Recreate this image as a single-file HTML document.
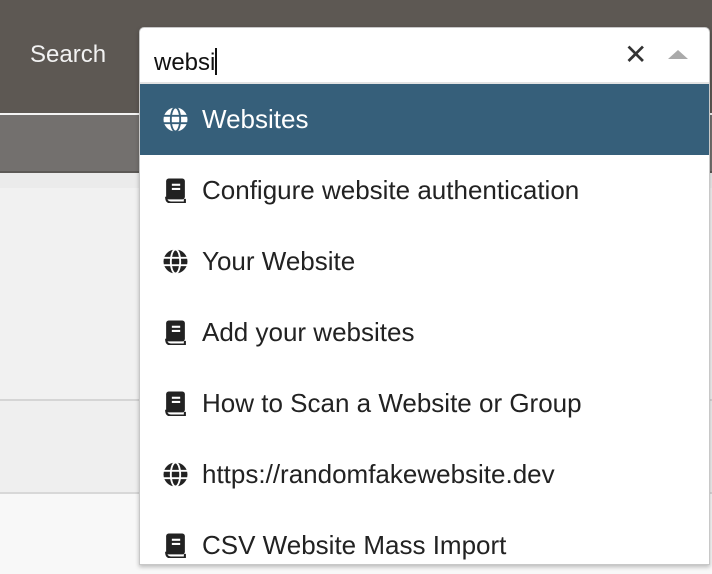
<!DOCTYPE html>
<html><head><style>
body{margin:0;width:712px;height:574px;position:relative;overflow:hidden;font-family:"Liberation Sans",Arial,sans-serif;background:#f8f8f8}
.abs{position:absolute;left:0;width:712px}
.dd{position:absolute;left:139px;top:27px;width:569px;height:536px;background:#fff;border:1px solid #c8c8c8;border-radius:5px 5px 0 0;box-shadow:0 2px 4px rgba(0,0,0,.25);overflow:hidden}
.inp{height:54px;border-bottom:2px solid #e3e3e3;position:relative}
.inp span{position:absolute;left:14px;top:20px;font-size:24px;color:#111}
.cur{display:inline-block;width:1.5px;height:27px;background:#111;vertical-align:-5px}
.it{height:71px;display:flex;align-items:center;font-size:26px;color:#222;padding-left:23px;white-space:nowrap}
.it svg{width:25px;height:25px;margin-right:14px;flex:none}
.sel{background:#365f7a;color:#fff}
</style></head><body>
<div class="abs" style="top:0;height:113px;background:#5d5853"></div>
<div class="abs" style="top:113px;height:2px;background:#f4f4f4"></div>
<div class="abs" style="top:115px;height:56px;background:#73706e"></div>
<div class="abs" style="top:171px;height:2px;background:#5c5956"></div>
<div class="abs" style="top:173px;height:15px;background:#ebebeb"></div>
<div class="abs" style="top:188px;height:211px;background:#f1f1f1"></div>
<div class="abs" style="top:399px;height:2px;background:#d5d5d5"></div>
<div class="abs" style="top:401px;height:91px;background:#efefef"></div>
<div class="abs" style="top:492px;height:2px;background:#d8d8d8"></div>
<div style="position:absolute;left:30px;top:41px;font-size:24px;color:#f2f2f2">Search</div>
<div class="dd">
<div class="inp"><span>websi<i class="cur"></i></span>
<div style="position:absolute;left:484px;top:10px;font-size:28px;color:#333">✕</div>
<div style="position:absolute;left:528px;top:22px;width:0;height:0;border-left:10px solid transparent;border-right:10px solid transparent;border-bottom:9px solid #aaa"></div></div>
<div class="it sel"><svg viewBox="0 0 24 24"><circle cx="12" cy="12" r="11.5" fill="#fff"/><g stroke="#365f7a" stroke-width="1.8" fill="none"><ellipse cx="12" cy="12" rx="4.5" ry="11.5"/><line x1="0" y1="8.5" x2="24" y2="8.5"/><line x1="0" y1="15.5" x2="24" y2="15.5"/></g></svg>Websites</div>
<div class="it"><svg viewBox="0 0 24 24"><rect x="3" y="0.5" width="18" height="20" rx="2.5" fill="#222"/><path d="M3 18 Q3 23.5 7.5 23.5 H21 V20" fill="none" stroke="#222" stroke-width="2"/><rect x="8.5" y="5.5" width="8" height="2" fill="#fff"/><rect x="8.5" y="9.5" width="8" height="2" fill="#fff"/></svg>Configure website authentication</div>
<div class="it"><svg viewBox="0 0 24 24"><circle cx="12" cy="12" r="11.5" fill="#222"/><g stroke="#fff" stroke-width="1.8" fill="none"><ellipse cx="12" cy="12" rx="4.5" ry="11.5"/><line x1="0" y1="8.5" x2="24" y2="8.5"/><line x1="0" y1="15.5" x2="24" y2="15.5"/></g></svg>Your Website</div>
<div class="it"><svg viewBox="0 0 24 24"><rect x="3" y="0.5" width="18" height="20" rx="2.5" fill="#222"/><path d="M3 18 Q3 23.5 7.5 23.5 H21 V20" fill="none" stroke="#222" stroke-width="2"/><rect x="8.5" y="5.5" width="8" height="2" fill="#fff"/><rect x="8.5" y="9.5" width="8" height="2" fill="#fff"/></svg>Add your websites</div>
<div class="it"><svg viewBox="0 0 24 24"><rect x="3" y="0.5" width="18" height="20" rx="2.5" fill="#222"/><path d="M3 18 Q3 23.5 7.5 23.5 H21 V20" fill="none" stroke="#222" stroke-width="2"/><rect x="8.5" y="5.5" width="8" height="2" fill="#fff"/><rect x="8.5" y="9.5" width="8" height="2" fill="#fff"/></svg>How to Scan a Website or Group</div>
<div class="it"><svg viewBox="0 0 24 24"><circle cx="12" cy="12" r="11.5" fill="#222"/><g stroke="#fff" stroke-width="1.8" fill="none"><ellipse cx="12" cy="12" rx="4.5" ry="11.5"/><line x1="0" y1="8.5" x2="24" y2="8.5"/><line x1="0" y1="15.5" x2="24" y2="15.5"/></g></svg>https://randomfakewebsite.dev</div>
<div class="it" style="height:56px;padding-top:7px"><svg viewBox="0 0 24 24"><rect x="3" y="0.5" width="18" height="20" rx="2.5" fill="#222"/><path d="M3 18 Q3 23.5 7.5 23.5 H21 V20" fill="none" stroke="#222" stroke-width="2"/><rect x="8.5" y="5.5" width="8" height="2" fill="#fff"/><rect x="8.5" y="9.5" width="8" height="2" fill="#fff"/></svg>CSV Website Mass Import</div>
</div>
</body></html>
